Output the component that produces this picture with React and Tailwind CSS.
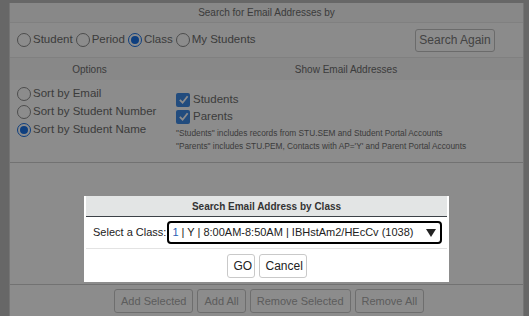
import { useState } from "react";

function Radio({ checked, label }) {
  return (
    <label className="inline-flex items-center gap-[2px] h-[18px]">
      <span
        className={
          "w-[14px] h-[14px] rounded-full border flex items-center justify-center bg-white " +
          (checked ? "border-[#1a73e8]" : "border-[#8c8c8c]")
        }
      >
        {checked && <span className="w-[8px] h-[8px] rounded-full bg-[#1a73e8]" />}
      </span>
      <span>{label}</span>
    </label>
  );
}

function Check({ label }) {
  return (
    <label className="flex items-center gap-[3px] h-[17px]">
      <span className="w-[14px] h-[14px] rounded-[2px] bg-[#3f8ae6] flex items-center justify-center">
        <svg width="11" height="11" viewBox="0 0 12 12">
          <path d="M2 6.5 L5 9.5 L10.5 2.5" fill="none" stroke="white" strokeWidth="2" />
        </svg>
      </span>
      <span>{label}</span>
    </label>
  );
}

const btn = "h-[24px] px-[6px] border border-[#c9c9c9] rounded-[3px] bg-white";
const pageBtn = "h-[24px] px-[6px] border border-[#c9c9c9] rounded-[3px]";

export default function App() {
  const [cls] = useState("1 | Y | 8:00AM-8:50AM | IBHstAm2/HEcCv (1038)");

  return (
    <div className="relative w-[529px] h-[316px] overflow-hidden bg-[#bcbcbc] font-['Liberation_Sans',Arial,sans-serif] text-[#6e6e6e]">
      {/* Page underneath */}
      <div className="ml-[9px] mr-[5px] mt-[3px] h-[313px] bg-white border-x border-[#d5d5d5]">
        <div className="h-[20px] flex items-center justify-center text-[10px] bg-[#f7f7f7] border-b border-[#e9e9e9]">
          Search for Email Addresses by
        </div>
        <div className="h-[35px] flex items-center pl-[7px] pr-[28px] text-[11.5px] bg-[#fdfdfd] border-b border-[#e9e9e9]">
          <div className="flex items-center gap-[3px]">
            <Radio label="Student" />
            <Radio label="Period" />
            <Radio label="Class" checked />
            <Radio label="My Students" />
          </div>
          <button className="ml-auto h-[23px] w-[80px] border border-[#c4c4c4] rounded-[3px] text-[12px] text-[#7a7a7a] bg-white">
            Search Again
          </button>
        </div>
        <div className="grid grid-cols-[159px_1fr]">
          <div className="h-[22px] flex items-center justify-center text-[10px] bg-[#f7f7f7]">Options</div>
          <div className="h-[22px] flex items-center justify-center text-[10px] bg-[#f7f7f7]">Show Email Addresses</div>
          <div className="pl-[7px] pt-[5px] flex flex-col text-[11.5px] h-[82px]">
            <Radio label="Sort by Email" />
            <Radio label="Sort by Student Number" />
            <Radio label="Sort by Student Name" checked />
          </div>
          <div className="pl-[7px] pt-[11px] text-[11.5px]">
            <div className="flex flex-col">
              <Check label="Students" />
              <Check label="Parents" />
            </div>
            <div className="text-[8.3px] leading-[13px] mt-[2px]">
              <div>"Students" includes records from STU.SEM and Student Portal Accounts</div>
              <div>"Parents" includes STU.PEM, Contacts with AP='Y' and Parent Portal Accounts</div>
            </div>
          </div>
        </div>
        <div className="h-[122px] border-t border-[#cfcfcf]" />
        <div className="border-t border-[#cfcfcf] pt-[4px] pl-[104px] flex gap-[4px] text-[11px] text-[#a9a9a9]">
          <button className={pageBtn}>Add Selected</button>
          <button className={pageBtn}>Add All</button>
          <button className={pageBtn}>Remove Selected</button>
          <button className={pageBtn}>Remove All</button>
        </div>
      </div>

      {/* Backdrop */}
      <div className="absolute inset-0 bg-black/45" />

      {/* Dialog */}
      <div className="absolute left-[84px] top-[196px] w-[365px] bg-white border-x-2 border-white text-[#222]">
        <div className="h-[21px] flex items-center justify-center bg-[#e3e5e5] border-b border-[#3c4147] text-[10px] font-bold text-[#333]">
          Search Email Address by Class
        </div>
        <div className="h-[32px] flex items-center pl-[7px] text-[11px] border-b border-[#e3e3e3]">
          <span className="mr-[1px]">Select a Class:</span>
          <div className="w-[275px] h-[23px] border-2 border-black rounded-[4px] flex items-center pl-[3px] pr-[4px] text-[11px]">
            <span className="text-[#2b5fb3]">1</span>
            <span className="whitespace-pre">{cls.slice(1)}</span>
            <svg className="ml-auto" width="10" height="8" viewBox="0 0 10 8">
              <path d="M0 0 H10 L5 8 Z" fill="#222" />
            </svg>
          </div>
        </div>
        <div className="h-[33px] flex items-center justify-center gap-[4px] text-[12px]">
          <button className={btn + " w-[28px] px-0"}>GO</button>
          <button className={btn + " w-[48px] px-0"}>Cancel</button>
        </div>
      </div>
    </div>
  );
}
